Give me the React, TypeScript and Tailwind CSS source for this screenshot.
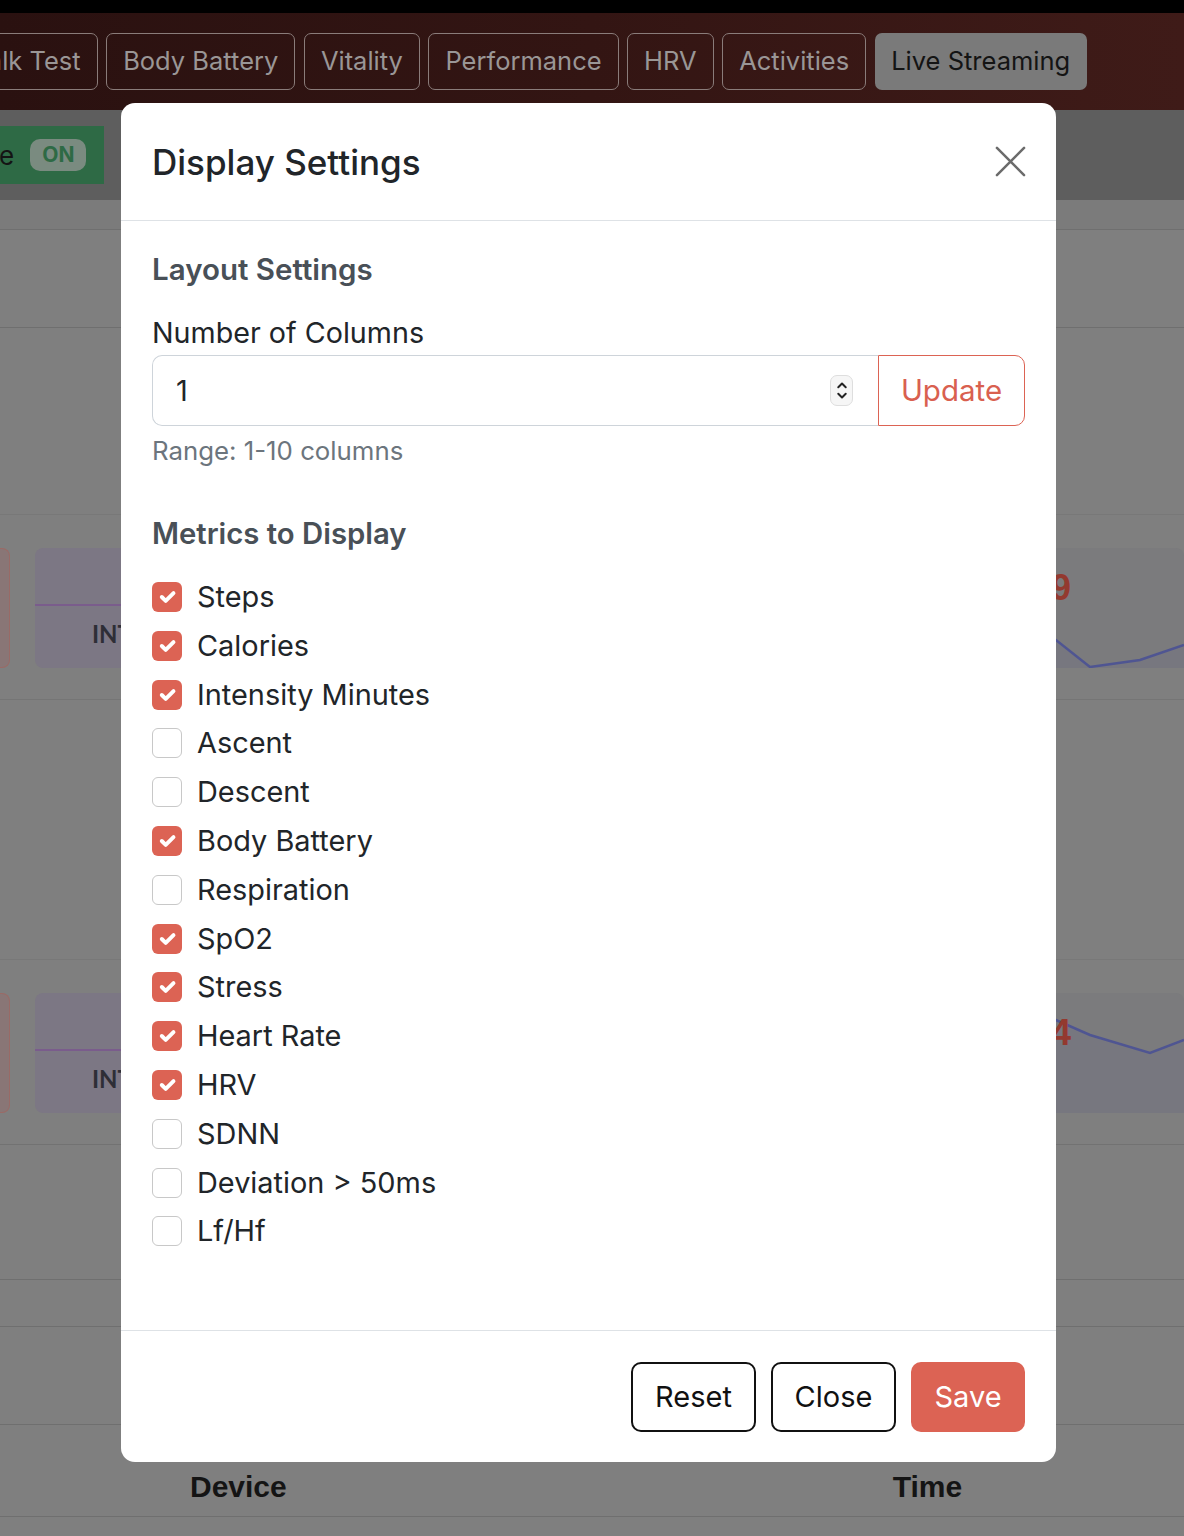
import { useState } from "react";

const tabs = [
  "Walk Test",
  "Body Battery",
  "Vitality",
  "Performance",
  "HRV",
  "Activities",
  "Live Streaming",
];

const initialMetrics = [
  { name: "Steps", on: true },
  { name: "Calories", on: true },
  { name: "Intensity Minutes", on: true },
  { name: "Ascent", on: false },
  { name: "Descent", on: false },
  { name: "Body Battery", on: true },
  { name: "Respiration", on: false },
  { name: "SpO2", on: true },
  { name: "Stress", on: true },
  { name: "Heart Rate", on: true },
  { name: "HRV", on: true },
  { name: "SDNN", on: false },
  { name: "Deviation > 50ms", on: false },
  { name: "Lf/Hf", on: false },
];

function CardRow({ value, points }: { value: string; points: string }) {
  return (
    <div className="flex h-[120px]">
      {/* left card, mostly off screen */}
      <div className="h-full w-[10px] rounded-r-[8px] border border-l-0 border-[#9a6a66] bg-[#897676]" />
      {/* purple metric card */}
      <div className="ml-[25px] flex h-full w-[560px] flex-col rounded-[8px] bg-[#7c7784]">
        <div className="mt-[56px] h-[2px] bg-[#7a5c8c]" />
        <div className="ml-[57px] mt-[14px] font-['Lato',sans-serif] text-[24px] font-bold leading-[28px] text-[#2e2e36]">
          INTENSITY
        </div>
      </div>
      {/* right chart card */}
      <div className="relative ml-[25px] h-full flex-1 rounded-[8px] bg-[#7b7b7d]">
        <svg className="absolute inset-0 h-full w-full" viewBox="0 0 564 120" preserveAspectRatio="none">
          <polygon points={`${points} 564,120 380,120`} fill="#77777f" />
          <polyline points={points} fill="none" stroke="#4f5592" strokeWidth="2.5" />
        </svg>
        <div className="relative ml-[431px] mt-[20px] font-['Liberation_Sans',sans-serif] text-[36px] font-bold leading-[40px] text-[#93392f]">
          {value}
        </div>
      </div>
    </div>
  );
}

export default function App() {
  const [metrics, setMetrics] = useState(initialMetrics);
  const [columns, setColumns] = useState("1");

  function toggle(i: number) {
    setMetrics((m) => m.map((x, j) => (j === i ? { ...x, on: !x.on } : x)));
  }

  return (
    <div className="relative h-[1536px] w-[1184px] overflow-hidden bg-[#7f7f7f] font-[Inter,sans-serif]">
      {/* Top strip */}
      <div className="h-[13px] bg-black" />

      {/* Nav header */}
      <header className="h-[97px] bg-gradient-to-r from-[#2a1110] via-[#331513] to-[#3f1b18] pt-[20px]">
        <nav className="ml-[-53px] flex gap-[8.5px]">
          {tabs.map((t) =>
            t === "Live Streaming" ? (
              <div
                key={t}
                className="flex h-[57px] items-center rounded-[7px] bg-[#7a7a7a] px-[16.5px] text-[25.5px] text-[#141414]"
              >
                {t}
              </div>
            ) : (
              <div
                key={t}
                className="flex h-[57px] items-center rounded-[7px] border-[1.5px] border-[#8a7c7a] px-[16px] text-[25.5px] text-[#9a9696]"
              >
                {t}
              </div>
            ),
          )}
        </nav>
      </header>

      {/* Sub header */}
      <div className="h-[90px] bg-[#5e5e5e] pt-[16px]">
        <div className="ml-[-60px] flex h-[58px] w-[164px] items-center gap-[16px] bg-[#2e6a45] pl-[24px]">
          <span className="text-[26px] text-[#141414]">Live</span>
          <span className="rounded-[10px] bg-[#7a8b80] px-[12px] text-[21px] font-bold leading-[32px] text-[#2e6a45]">
            ON
          </span>
        </div>
      </div>

      {/* Page content behind the overlay */}
      <div className="h-[30px] border-b border-[#6f6f6f] bg-[#7b7b7b]" />
      <div className="h-[98px] border-b border-[#6f6f6f]" />
      <div className="h-[187px] border-b border-[#787878]" />
      <div className="h-[185px] border-b border-[#757575] pt-[33px]">
        <CardRow value="9" points="380,66 436,92 470,119 520,112 564,97" />
      </div>
      <div className="h-[260px] border-b border-[#787878]" />
      <div className="h-[185px] border-b border-[#727272] pt-[33px]">
        <CardRow value="4" points="380,30 436,27 470,42 530,60 564,47" />
      </div>
      <div className="h-[135px] border-b border-[#6f6f6f]" />
      <div className="h-[47px] border-b border-[#6f6f6f]" />
      <div className="h-[98px] border-b border-[#6f6f6f]" />
      <div className="flex h-[92px] items-center border-b border-[#6f6f6f] pt-[32px] font-['Liberation_Sans',sans-serif] text-[30px] font-bold text-[#141414]">
        <span className="ml-[190px]">Device</span>
        <span className="ml-[606px]">Time</span>
      </div>

      {/* Modal */}
      <div className="absolute left-[121px] top-[103px] flex h-[1359px] w-[935px] flex-col rounded-[14px] bg-white text-[#212529]">
        <div className="flex h-[118px] items-center justify-between border-b border-[#dee2e6] pl-[31px] pr-[30px]">
          <h2 className="text-[35px] font-medium leading-[42px]">Display Settings</h2>
          <button className="flex h-[32px] w-[32px] items-center justify-center">
            <svg viewBox="0 0 32 32" className="h-[31px] w-[31px]" stroke="#6b6b6b" strokeWidth="2.6" strokeLinecap="round">
              <path d="M2 2 30 30M30 2 2 30" />
            </svg>
          </button>
        </div>

        <div className="flex-1 px-[31px] pt-[31px]">
          <h3 className="text-[29.5px] font-semibold leading-[34px] text-[#495057]">Layout Settings</h3>
          <label className="mt-[30px] block text-[28.7px] leading-[34px]">Number of Columns</label>
          <div className="mt-[5px] flex h-[71px]">
            <div className="flex flex-1 items-center rounded-l-[10px] border-[1.5px] border-r-0 border-[#ced4da] pl-[23px] pr-[25px]">
              <input
                value={columns}
                onChange={(e) => setColumns(e.target.value)}
                className="flex-1 bg-transparent text-[29px] outline-none"
              />
              <div className="flex h-[31px] w-[23px] flex-col items-center justify-center rounded-[7px] border border-[#dedede] bg-[#f6f6f6]">
                <svg viewBox="0 0 12 20" className="h-[25px] w-[14px]" fill="none" stroke="#222" strokeWidth="1.7" strokeLinecap="round" strokeLinejoin="round">
                  <path d="M2.8 7.2 6 4 9.2 7.2M2.8 12.8 6 16 9.2 12.8" />
                </svg>
              </div>
            </div>
            <button className="w-[147px] rounded-r-[10px] border-[1.5px] border-[#dc6354] text-[29.5px] text-[#d9604f]">
              Update
            </button>
          </div>
          <p className="mt-[7px] text-[25.8px] leading-[36px] text-[#6c757d]">Range: 1-10 columns</p>

          <h3 className="mt-[48px] text-[29.3px] font-semibold leading-[34px] text-[#495057]">Metrics to Display</h3>
          <ul className="mt-[21.6px]">
            {metrics.map((m, i) => (
              <li key={m.name} className="flex h-[48.8px] items-center">
                <button
                  onClick={() => toggle(i)}
                  className={
                    m.on
                      ? "flex h-[30px] w-[30px] items-center justify-center rounded-[6px] bg-[#dc6354]"
                      : "h-[30px] w-[30px] rounded-[6px] border-[1.5px] border-[#c8c8c8] bg-white"
                  }
                >
                  {m.on && (
                    <svg viewBox="0 0 20 20" className="h-[26px] w-[26px]" fill="none" stroke="#fff" strokeWidth="3" strokeLinecap="round" strokeLinejoin="round">
                      <path d="m6 10 3 3 6-6" />
                    </svg>
                  )}
                </button>
                <span className="ml-[15px] text-[28.9px] leading-[34px]">{m.name}</span>
              </li>
            ))}
          </ul>
        </div>

        <div className="flex h-[132px] justify-end gap-[15px] border-t border-[#dee2e6] pr-[31px] pt-[31px]">
          <button className="h-[70px] w-[125px] rounded-[10px] border-2 border-[#111] text-[29px] text-[#111]">Reset</button>
          <button className="h-[70px] w-[125px] rounded-[10px] border-2 border-[#111] text-[29px] text-[#111]">Close</button>
          <button className="h-[70px] w-[114px] rounded-[10px] bg-[#dc6354] text-[29px] text-white">Save</button>
        </div>
      </div>
    </div>
  );
}
